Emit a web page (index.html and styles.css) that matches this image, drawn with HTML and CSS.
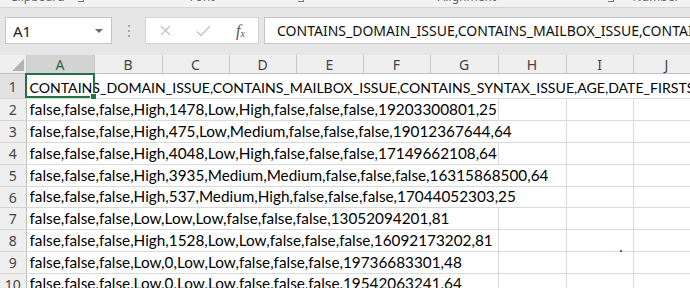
FILE: index.html
```html
<!DOCTYPE html>
<html lang="en">
<head>
    <meta charset="UTF-8">
    <meta name="viewport" content="width=device-width, initial-scale=1.0">
    <title>Book1 - Excel</title>
    <link rel="stylesheet" href="styles.css">
</head>
<body>
    <div class="ribbon">
        <div class="group group-clipboard"><span class="label">Clipboard</span><span class="launcher"></span></div>
        <div class="group group-font"><span class="label">Font</span><span class="launcher"></span></div>
        <div class="group group-align"><span class="label">Alignment</span><span class="launcher"></span></div>
        <div class="group group-number"><span class="label">Number</span></div>
    </div>

    <div class="formula-bar">
        <div class="name-box">
            <span>A1</span>
            <span class="drop-arrow"></span>
        </div>
        <div class="grip"><i></i><i></i><i></i></div>
        <div class="fx-buttons">
            <svg class="btn-cancel" width="11" height="11" viewBox="0 0 11 11">
                <path d="M1 1 L10 10 M10 1 L1 10" stroke="#c4c4c4" stroke-width="1.3" fill="none"/>
            </svg>
            <svg class="btn-enter" width="15" height="12" viewBox="0 0 15 12">
                <path d="M1 6.5 L5 10.5 L14 1" stroke="#c4c4c4" stroke-width="1.4" fill="none"/>
            </svg>
            <span class="fx">f<sub>x</sub></span>
        </div>
        <div class="formula-input">CONTAINS_DOMAIN_ISSUE,CONTAINS_MAILBOX_ISSUE,CONTAINS_SYNTAX_ISSUE,AGE,DATE_FIRSTSEEN</div>
    </div>

    <div class="sheet">
        <table class="grid">
            <colgroup>
                <col class="c-row"><col class="c-wide"><col class="c-wide"><col class="c-std"><col class="c-std">
                <col class="c-std"><col class="c-std"><col class="c-wide"><col class="c-wide"><col class="c-std"><col class="c-std">
            </colgroup>
            <thead>
                <tr>
                    <th class="corner"><span class="select-all"></span></th>
                    <th class="selected">A</th><th>B</th><th>C</th><th>D</th><th>E</th>
                    <th>F</th><th>G</th><th>H</th><th>I</th><th>J</th>
                </tr>
            </thead>
            <tbody>
                <tr class="first">
                    <th class="row-selected">1</th>
                    <td class="caps" colspan="10">CONTAINS_DOMAIN_ISSUE,CONTAINS_MAILBOX_ISSUE,CONTAINS_SYNTAX_ISSUE,AGE,DATE_FIRSTSEEN</td>
                </tr>
                <tr>
                    <th>2</th>
                    <td colspan="7">false,false,false,High,1478,Low,High,false,false,false,19203300801,25</td>
                    <td></td><td></td><td></td>
                </tr>
                <tr>
                    <th>3</th>
                    <td colspan="8">false,false,false,High,475,Low,Medium,false,false,false,19012367644,64</td>
                    <td></td><td></td>
                </tr>
                <tr>
                    <th>4</th>
                    <td colspan="7">false,false,false,High,4048,Low,High,false,false,false,17149662108,64</td>
                    <td></td><td></td><td></td>
                </tr>
                <tr>
                    <th>5</th>
                    <td colspan="8">false,false,false,High,3935,Medium,Medium,false,false,false,16315868500,64</td>
                    <td></td><td></td>
                </tr>
                <tr class="short">
                    <th>6</th>
                    <td colspan="8">false,false,false,High,537,Medium,High,false,false,false,17044052303,25</td>
                    <td></td><td></td>
                </tr>
                <tr>
                    <th>7</th>
                    <td colspan="7">false,false,false,Low,Low,Low,false,false,false,13052094201,81</td>
                    <td></td><td></td><td></td>
                </tr>
                <tr>
                    <th>8</th>
                    <td colspan="7">false,false,false,High,1528,Low,Low,false,false,false,16092173202,81</td>
                    <td></td><td></td><td></td>
                </tr>
                <tr>
                    <th>9</th>
                    <td colspan="7">false,false,false,Low,0,Low,Low,false,false,false,19736683301,48</td>
                    <td></td><td></td><td></td>
                </tr>
                <tr class="short">
                    <th>10</th>
                    <td colspan="7">false,false,false,Low,0,Low,Low,false,false,false,19542063241,64</td>
                    <td></td><td></td><td></td>
                </tr>
            </tbody>
        </table>
        <!-- active cell frame sits over A1 -->
        <div class="active-cell"><span class="fill-handle"></span></div>
        <div class="stray-dot"></div>
    </div>
</body>
</html>
```

FILE: styles.css
```css
body {
    margin: 0;
    width: 690px;
    height: 288px;
    overflow: hidden;
    background: #e6e6e6;
    font-family: "Noto Sans", sans-serif;
}

/* ribbon group labels, mostly scrolled out of view */
.ribbon {
    display: flex;
    height: 7px;
    overflow: hidden;
    background: #f3f3f3;
    border-bottom: 1px solid #d6d6d6;
}
.group {
    display: flex;
    justify-content: center;
    position: relative;
    height: 7px;
}
.group-clipboard { width: 92px; justify-content: flex-start; padding-left: 10px; box-sizing: border-box; }
.group-font { width: 220px; }
.group-align { width: 310px; }
.group-number { flex: 1; }
.label {
    font-size: 12px;
    line-height: 12px;
    margin-top: -9px;
    color: #666;
}
.launcher {
    position: absolute;
    right: 8px;
    top: -4px;
    width: 5px;
    height: 5px;
    border-right: 1px solid #777;
    border-bottom: 1px solid #777;
}

/* formula bar */
.formula-bar {
    display: flex;
    align-items: center;
    height: 27px;
    margin-top: 9px;
    padding-left: 5px;
}
.name-box {
    display: flex;
    align-items: center;
    justify-content: space-between;
    width: 107px;
    height: 27px;
    box-sizing: border-box;
    padding: 0 8px 0 7px;
    background: #fff;
    border: 1px solid #c6c6c6;
    font-size: 15px;
    color: #222;
}
.drop-arrow {
    width: 0;
    height: 0;
    border-left: 4px solid transparent;
    border-right: 4px solid transparent;
    border-top: 4px solid #6b6b6b;
}
.grip {
    display: flex;
    flex-direction: column;
    gap: 3px;
    width: 33px;
    align-items: center;
}
.grip i {
    display: block;
    width: 2px;
    height: 2px;
    background: #a8a8a8;
}
.fx-buttons {
    display: flex;
    align-items: center;
    width: 114px;
    height: 27px;
    box-sizing: border-box;
    background: #fff;
    border: 1px solid #d4d4d4;
    padding-left: 14px;
}
.btn-cancel { margin-right: 25px; }
.btn-enter { margin-right: 25px; }
.fx {
    font-family: "Liberation Serif", serif;
    font-style: italic;
    font-size: 16px;
    color: #555;
}
.fx sub {
    font-size: 10px;
    vertical-align: -1px;
}
.formula-input {
    flex: 1;
    height: 27px;
    box-sizing: border-box;
    margin-left: 5px;
    padding-left: 12px;
    background: #fff;
    border: 1px solid #c6c6c6;
    border-right: none;
    font-size: 14px;
    line-height: 25px;
    white-space: nowrap;
    overflow: hidden;
    color: #111;
}

/* worksheet grid */
.sheet {
    position: relative;
    margin-top: 11px;
    background: #fff;
}
.grid {
    table-layout: fixed;
    border-collapse: collapse;
    width: 700px;
}
.c-row { width: 26px; }
.c-wide { width: 68px; }
.c-std { width: 67px; }

.grid thead th {
    height: 18px;
    padding: 0;
    background: #efefef;
    border-right: 1px solid #c8c8c8;
    border-bottom: 1px solid #c0c0c0;
    font-weight: normal;
    font-size: 14px;
    line-height: 17px;
    color: #444;
}
.grid thead th.selected {
    background: #d3d3d3;
    color: #276946;
}
.corner {
    position: relative;
}
.select-all {
    position: absolute;
    right: 2px;
    bottom: 2px;
    width: 0;
    height: 0;
    border-left: 12px solid transparent;
    border-bottom: 12px solid #b4b4b4;
}
.grid tbody th {
    padding: 0;
    background: #efefef;
    border-right: 1px solid #c0c0c0;
    border-bottom: 1px solid #d4d4d4;
    font-weight: normal;
    font-size: 14px;
    line-height: 17px;
    color: #444;
}
.grid tbody th.row-selected {
    background: #e1e1e1;
}
.grid tbody tr {
    height: 22px;
}
.grid tbody tr.first {
    height: 25px;
}
.grid tbody tr.short {
    height: 21px;
}
.grid td {
    padding: 0 0 2px 3px;
    border: 1px solid #d9d9d9;
    vertical-align: bottom;
    font-family: "Lato", sans-serif;
    font-size: 15.3px;
    line-height: 17px;
    white-space: nowrap;
    overflow: visible;
    color: #000;
}
.grid td.caps {
    font-size: 14.1px;
}

.active-cell {
    position: absolute;
    left: 25px;
    top: 18px;
    width: 70px;
    height: 25px;
    box-sizing: border-box;
    border: 2px solid #217346;
    box-shadow: inset 0 0 0 1px #fff;
}
.fill-handle {
    position: absolute;
    right: -4px;
    bottom: -4px;
    width: 5px;
    height: 5px;
    background: #217346;
    border: 1px solid #fff;
}
.stray-dot {
    position: absolute;
    left: 620px;
    top: 195px;
    width: 2px;
    height: 2px;
    background: #2f6fd0;
}
```
